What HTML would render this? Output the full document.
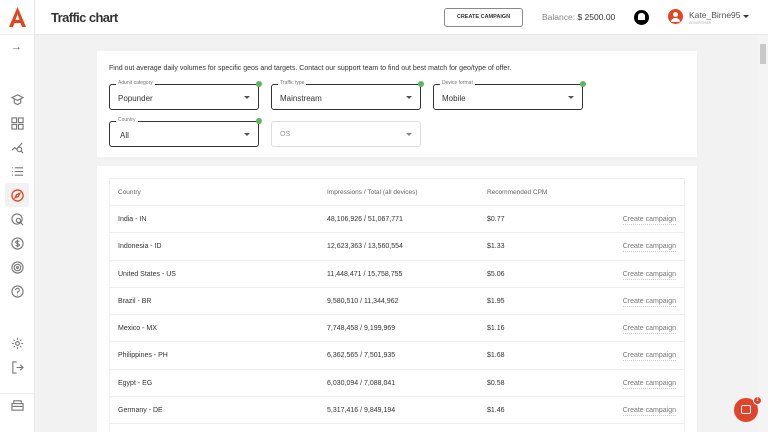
<!DOCTYPE html><html><head><style>
*{box-sizing:border-box;margin:0;padding:0}
html,body{width:768px;height:432px;overflow:hidden}
body{background:#f2f2f2;font-family:"Liberation Sans",sans-serif;color:#333;position:relative}
.side{position:absolute;left:0;top:0;width:35px;height:432px;background:#fff;border-right:1px solid #e6e6e6}
.hdr{position:absolute;left:35px;top:0;right:0;height:35px;background:#fff;border-bottom:1px solid #e8e8e8}
.ic{position:absolute;left:11px;width:13px;height:13px;color:#777}
.card{position:absolute;left:97px;width:600px;background:#fff;overflow:hidden}
.sel{position:absolute;height:26px;border:1.5px solid #333;border-radius:3px;font-size:8px;padding:9px 8px}
.sel .lb{position:absolute;top:-5px;left:6px;background:#fff;padding:0 2px;font-size:5px;color:#777}
.sel .ar{position:absolute;right:8px;top:11px;border:3px solid transparent;border-top:3px solid #555}
.sel .dot{position:absolute;right:-4px;top:-4px;width:6px;height:6px;border-radius:50%;background:#5cb85c}
.tbl{position:absolute;left:12px;top:12px;width:576px;border:1px solid #eee}
.row{height:27.3px;border-top:1px solid #eee;font-size:7px;position:relative;line-height:27px}
.row span{position:absolute}
.c1{left:8px}.c2{left:217px}.c3{left:377px}.c4{right:8px;color:#777;line-height:9px;top:9px;border-bottom:1px dotted #ccc}
</style></head><body>
<div class="side">
<svg style="position:absolute;left:8px;top:6px" width="19" height="22" viewBox="0 0 19 22"><path d="M9.5 1L1 21h4l1.5-4h6l1.5 4h4zM9.5 8l2 6h-4z" fill="#e8431f"/></svg>
<div style="position:absolute;left:0;top:34px;width:35px;border-top:1px solid #eee"></div>
<div style="position:absolute;left:11px;top:41px;font-size:11px;color:#666">→</div>
<svg class="ic" style="top:93px" viewBox="0 0 14 14" fill="none" stroke="#777" stroke-width="1.2"><path d="M1 5l6-3 6 3-6 3zM3.5 6.5v4l3.5 2 3.5-2v-4"/></svg>
<svg class="ic" style="top:117px" viewBox="0 0 14 14" fill="none" stroke="#777" stroke-width="1.2"><rect x="1" y="1" width="5" height="5"/><rect x="8" y="1" width="5" height="5"/><rect x="1" y="8" width="5" height="5"/><rect x="8" y="8" width="5" height="5"/></svg>
<svg class="ic" style="top:141px" viewBox="0 0 14 14" fill="none" stroke="#777" stroke-width="1.2"><path d="M1 10l3-3 2 2 6-7"/><circle cx="9" cy="9" r="2.5"/><path d="M11 11l2 2"/></svg>
<svg class="ic" style="top:165px" viewBox="0 0 14 14" fill="none" stroke="#777" stroke-width="1.2"><path d="M1 3h1M4 3h9M1 7h1M4 7h9M1 11h1M4 11h9"/></svg>
<div style="position:absolute;left:5px;top:183px;width:24px;height:24px;background:#f2f2f2;border-radius:3px"></div>
<svg class="ic" style="top:189px" viewBox="0 0 14 14" fill="none" stroke="#e8431f" stroke-width="1.4"><circle cx="7" cy="7" r="6"/><path d="M9.5 4.5L6 6 4.5 9.5 8 8z"/></svg>
<svg class="ic" style="top:213px" viewBox="0 0 14 14" fill="none" stroke="#777" stroke-width="1.2"><circle cx="6.5" cy="6.5" r="5.5"/><circle cx="8" cy="8" r="2.3"/><path d="M10 10l3 3"/></svg>
<svg class="ic" style="top:237px" viewBox="0 0 14 14" fill="none" stroke="#777" stroke-width="1.2"><circle cx="7" cy="7" r="6"/><path d="M9 5c-1-1-4-1-4 .7S9 7 9 8.6 6 10 5 9M7 3v8"/></svg>
<svg class="ic" style="top:261px" viewBox="0 0 14 14" fill="none" stroke="#777" stroke-width="1.2"><circle cx="7" cy="7" r="6"/><circle cx="7" cy="7" r="3.5"/><circle cx="7" cy="7" r="1"/></svg>
<svg class="ic" style="top:285px" viewBox="0 0 14 14" fill="none" stroke="#777" stroke-width="1.2"><circle cx="7" cy="7" r="6"/><path d="M5 5.5a2 2 0 1 1 2 2v1.5M7 10.5v1"/></svg>
<svg class="ic" style="top:337px" viewBox="0 0 14 14" fill="none" stroke="#777" stroke-width="1.2"><circle cx="7" cy="7" r="2"/><path d="M7 1v2M7 11v2M1 7h2M11 7h2M2.8 2.8l1.4 1.4M9.8 9.8l1.4 1.4M2.8 11.2l1.4-1.4M9.8 4.2l1.4-1.4"/></svg>
<svg class="ic" style="top:361px" viewBox="0 0 14 14" fill="none" stroke="#777" stroke-width="1.2"><path d="M6 1H2v12h4M6 7h7M10 4l3 3-3 3"/></svg>
<div style="position:absolute;left:0;top:393px;width:35px;border-top:1px solid #eee"></div>
<svg class="ic" style="top:399px" viewBox="0 0 14 14" fill="none" stroke="#777" stroke-width="1.2"><rect x="1" y="5" width="12" height="7"/><path d="M1 8h12M3 5V2h8v3"/></svg>
</div>
<div class="hdr">
<div style="position:absolute;left:16px;top:10px;font-size:13px;letter-spacing:-0.6px;font-weight:bold;color:#333">Traffic chart</div>
<div style="position:absolute;left:409px;top:8px;width:79px;height:19px;border:1px solid #888;border-radius:3px;font-size:5.5px;font-weight:bold;text-align:center;line-height:17px">CREATE CAMPAIGN</div>
<div style="position:absolute;left:507px;top:12px;font-size:8.5px;color:#888">Balance: <span style="color:#333">$ 2500.00</span></div>
<div style="position:absolute;left:599px;top:10px;width:15px;height:15px;border-radius:50%;background:#000"><div style="position:absolute;left:4px;top:3px;width:7px;height:7px;background:#fff;border-radius:3px 3px 0 0"></div></div>
<div style="position:absolute;left:633px;top:9px;width:15px;height:15px;border-radius:50%;background:#e8431f"><div style="position:absolute;left:5px;top:3px;width:5px;height:5px;background:#fff;border-radius:50%"></div><div style="position:absolute;left:3px;top:9px;width:9px;height:4px;background:#fff;border-radius:4px 4px 0 0"></div></div>
<div style="position:absolute;left:654px;top:10px;font-size:8.5px;color:#555">Kate_Birne95</div>
<div style="position:absolute;left:654px;top:21px;font-size:3.5px;color:#aaa">ADVERTISER</div>
<div style="position:absolute;left:708px;top:15px;border:3px solid transparent;border-top:3px solid #333"></div>
</div>
<div style="position:absolute;left:758px;top:35px;width:10px;height:397px;background:#f4f4f4"><div style="position:absolute;left:2px;top:9px;width:6px;height:20px;background:#c8c8c8"></div></div>
<div class="card" style="top:51px;height:106px">
<div style="position:absolute;left:12px;top:14px;font-size:7px;color:#333">Find out average daily volumes for specific geos and targets. Contact our support team to find out best match for geo/type of offer.</div>
<div class="sel" style="left:12px;top:33px;width:150px"><span class="lb">Adunit category</span>Popunder<i class="ar"></i><i class="dot"></i></div>
<div class="sel" style="left:174px;top:33px;width:150px"><span class="lb">Traffic type</span>Mainstream<i class="ar"></i><i class="dot"></i></div>
<div class="sel" style="left:336px;top:33px;width:150px"><span class="lb">Device format</span>Mobile<i class="ar"></i><i class="dot"></i></div>
<div class="sel" style="left:12px;top:70px;width:150px;padding-left:10px"><span class="lb">Country</span>All<i class="ar"></i><i class="dot"></i></div>
<div class="sel" style="left:174px;top:70px;width:150px;border:1px solid #ddd;color:#999;font-size:7px">OS<i class="ar" style="border-top-color:#888"></i></div>
</div>
<div class="card" style="top:166px;height:266px">
<div class="tbl">
<div class="row" style="border-top:none;height:26px;color:#666;font-size:6.5px"><span class="c1">Country</span><span class="c2">Impressions / Total (all devices)</span><span class="c3">Recommended CPM</span></div>
<div class="row"><span class="c1">India - IN</span><span class="c2">48,106,926 / 51,067,771</span><span class="c3">$0.77</span><span class="c4">Create campaign</span></div>
<div class="row"><span class="c1">Indonesia - ID</span><span class="c2">12,623,363 / 13,560,554</span><span class="c3">$1.33</span><span class="c4">Create campaign</span></div>
<div class="row"><span class="c1">United States - US</span><span class="c2">11,448,471 / 15,758,755</span><span class="c3">$5.06</span><span class="c4">Create campaign</span></div>
<div class="row"><span class="c1">Brazil - BR</span><span class="c2">9,580,510 / 11,344,962</span><span class="c3">$1.95</span><span class="c4">Create campaign</span></div>
<div class="row"><span class="c1">Mexico - MX</span><span class="c2">7,748,458 / 9,199,969</span><span class="c3">$1.16</span><span class="c4">Create campaign</span></div>
<div class="row"><span class="c1">Philippines - PH</span><span class="c2">6,362,565 / 7,501,935</span><span class="c3">$1.68</span><span class="c4">Create campaign</span></div>
<div class="row"><span class="c1">Egypt - EG</span><span class="c2">6,030,094 / 7,088,041</span><span class="c3">$0.58</span><span class="c4">Create campaign</span></div>
<div class="row"><span class="c1">Germany - DE</span><span class="c2">5,317,416 / 9,849,194</span><span class="c3">$1.46</span><span class="c4">Create campaign</span></div>
<div class="row"></div>
</div></div>
<div style="position:absolute;left:734px;top:398px;width:24px;height:24px;border-radius:50%;background:#e0452b"><div style="position:absolute;left:7px;top:7px;width:10px;height:9px;border:1.5px solid #fff;border-radius:2px"></div></div>
<div style="position:absolute;left:753px;top:396px;width:9px;height:9px;border-radius:50%;background:#e0452b;border:1px solid #fff;color:#fff;font-size:5px;text-align:center;line-height:7px">1</div>
</body></html>
